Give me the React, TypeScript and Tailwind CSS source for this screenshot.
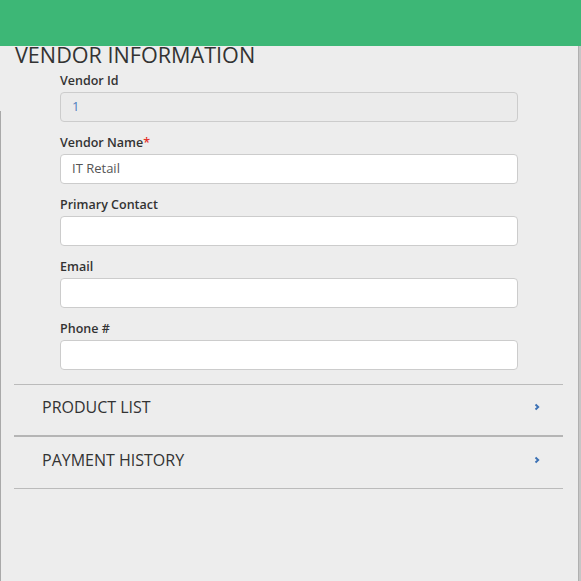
import React from 'react';

const Field: React.FC<{ label: string; value?: string; required?: boolean; disabled?: boolean }> = ({
  label,
  value = '',
  required,
  disabled
}) => (
  <div className="mb-[11px]">
    <div className="text-[12.5px] leading-[18px] font-semibold text-[#333] pt-px mb-[2px]">
      {label}
      {required && <span className="text-[#e4322b]">*</span>}
    </div>
    <div
      className={`h-[30px] rounded-[4px] border border-[#cccccc] px-[11px] flex items-center text-[13px] ${
        disabled ? 'bg-[#ebebeb] text-[#4e7fc0]' : 'bg-white text-[#555]'
      }`}
    >
      {value}
    </div>
  </div>
);

const Chevron = () => (
  <svg width="6" height="8" viewBox="0 0 6 8" className="block">
    <path d="M1.5 1.5 L4.2 4 L1.5 6.5" fill="none" stroke="#3b70b4" strokeWidth="1.9" />
  </svg>
);

const AccordionRow: React.FC<{ title: string; h: string }> = ({ title, h }) => (
  <div className={`${h} flex items-center justify-between pl-[28px] pr-[23px] pb-[6px]`}>
    <span className="text-[16px] text-[#333]">{title}</span>
    <Chevron />
  </div>
);

export default function App() {
  return (
    <div className="w-[581px] h-[581px] bg-[#ededed] flex flex-col font-['Open_Sans',sans-serif] overflow-hidden">
      <div className="h-[46px] bg-[#3db776] shrink-0" />
      <div className="flex flex-1">
        <div className="w-px flex flex-col">
          <div className="h-[65px]" />
          <div className="flex-1 bg-[#a9a9a9]" />
        </div>
        <div className="flex-1 pl-[13px] pr-[15px]">
          <h1 className="ml-px -mt-[2px] text-[21.6px] leading-[22px] text-[#333] mb-[5px]">VENDOR INFORMATION</h1>
          <div className="pl-[46px] pr-[45px]">
            <Field label="Vendor Id" value="1" disabled />
            <Field label="Vendor Name" value="IT Retail" required />
            <Field label="Primary Contact" />
            <Field label="Email" />
            <Field label="Phone #" />
          </div>
          <div className="mt-[14px] border-t border-[#bbbbbb]">
            <AccordionRow title="PRODUCT LIST" h="h-[50px]" />
          </div>
          <div className="border-t-2 border-[#b5b5b5]">
            <AccordionRow title="PAYMENT HISTORY" h="h-[51px]" />
          </div>
          <div className="border-t border-[#bbbbbb]" />
        </div>
        <div className="w-[3px] bg-[#c6c6c6] border-l border-[#b0b0b0]" />
      </div>
    </div>
  );
}
